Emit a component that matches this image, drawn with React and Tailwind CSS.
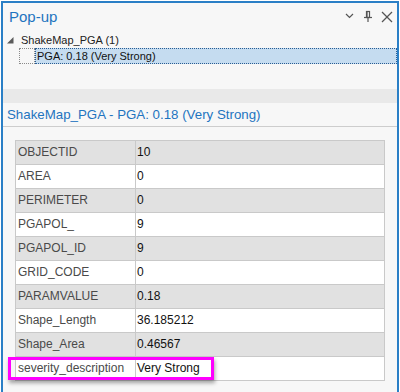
import React from "react";

const rows = [
  ["OBJECTID", "10"],
  ["AREA", "0"],
  ["PERIMETER", "0"],
  ["PGAPOL_", "9"],
  ["PGAPOL_ID", "9"],
  ["GRID_CODE", "0"],
  ["PARAMVALUE", "0.18"],
  ["Shape_Length", "36.185212"],
  ["Shape_Area", "0.46567"],
  ["severity_description", "Very Strong"],
];

function WindowButtons() {
  return (
    <svg width="50" height="14" viewBox="0 0 50 14" className="mt-[7px] mr-[3px]" fill="none" stroke="#555" strokeWidth="1.2">
      {/* chevron */}
      <polyline points="2,4 5.5,7.5 9,4" />
      {/* pin */}
      <rect x="22.5" y="1.5" width="3" height="6" />
      <line x1="23" y1="1.5" x2="23" y2="7.5" />
      <line x1="20" y1="7.5" x2="28" y2="7.5" />
      <line x1="24" y1="7.5" x2="24" y2="12" />
      {/* close */}
      <line x1="38" y1="2" x2="48" y2="12" />
      <line x1="48" y1="2" x2="38" y2="12" />
    </svg>
  );
}

export default function App() {
  return (
    <div className="w-[400px] h-[392px] bg-white pt-px px-px overflow-hidden font-['Liberation_Sans',Arial,sans-serif]">
      <div className="h-full border-2 border-b-0 border-[#2a7fc6] bg-[#f7f7f7] flex flex-col">
        {/* title bar */}
        <div className="flex justify-between h-[29px]">
          <div className="pl-[6px] pt-[6px] text-[15px] leading-[15px] text-[#1e74bf]">Pop-up</div>
          <WindowButtons />
        </div>

        {/* tree */}
        <div className="flex items-center h-[16px] text-[11px] leading-[16px] text-[#222]">
          <svg width="7" height="7" viewBox="0 0 7 7" className="ml-[4px] mr-[7px]">
            <polygon points="6.5,0 6.5,6.5 0,6.5" fill="#5a5a5a" />
          </svg>
          <span>ShakeMap_PGA (1)</span>
        </div>
        <div className="flex h-[16px] text-[11px] leading-[14px] text-[#111]">
          <div className="ml-[16px] w-[16px] h-[16px] border border-dotted border-[#8a8a8a]" />
          <div className="flex-1 h-[16px] bg-[#c5dcf0] border border-dotted border-[#2a5d93] pl-px">
            PGA: 0.18 (Very Strong)
          </div>
        </div>

        <div className="h-[25px]" />
        <div className="h-[14px] bg-[#e9e9e9]" />

        {/* feature header */}
        <div className="h-[24px] border-b border-[#cdcdcd] pl-[4px] text-[13.3px] leading-[23px] text-[#1e74bf]">
          ShakeMap_PGA - PGA: 0.18 (Very Strong)
        </div>

        {/* attribute table */}
        <div className="relative mt-[13px] ml-[12px] w-[370px] border-l border-t border-[#c9c9c9] text-[12px]">
          {rows.map(([k, v], i) => (
            <div key={k} className={`flex h-[24px] ${i % 2 === 0 ? "bg-[#e1e1e1]" : "bg-white"}`}>
              <div className="w-[120px] border-r border-b border-[#c9c9c9] pl-[2px] leading-[23px] text-[#4a4a4a]">{k}</div>
              <div className="flex-1 border-r border-b border-[#c9c9c9] pl-px leading-[23px] text-[#111]">{v}</div>
            </div>
          ))}
          <div className="absolute left-[-8px] top-[216px] w-[206px] h-[23px] border-[3px] border-[#ff00ff] shadow-[1px_3px_4px_rgba(0,0,0,0.35)]" />
        </div>
      </div>
    </div>
  );
}
